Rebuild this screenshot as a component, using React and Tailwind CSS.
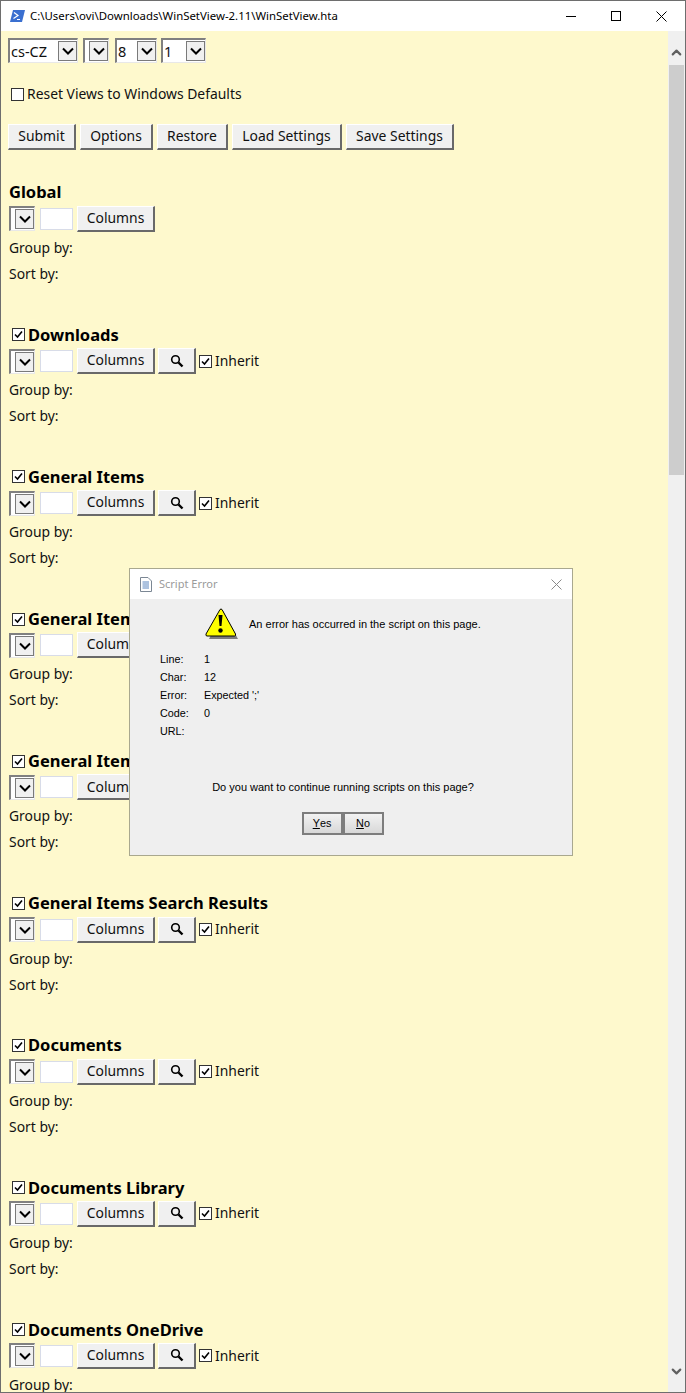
import { ChevronDown, ChevronUp } from "lucide-react";

const FONT = "font-['Noto_Sans','Open_Sans',sans-serif]";
const ARIAL = "font-['Liberation_Sans',Arial,sans-serif]";

const SECTIONS = [
  "Downloads",
  "General Items",
  "General Items",
  "General Items",
  "General Items Search Results",
  "Documents",
  "Documents Library",
  "Documents OneDrive",
];

function Arrow() {
  return (
    <span className="flex w-[19px] h-[20px] shrink-0 items-center justify-center bg-[#f0f0f0] border border-[#7a7a7a]">
      <svg width="12" height="8" viewBox="0 0 12 8">
        <path d="M1 1.5 L6 6.5 L11 1.5" fill="none" stroke="#000" strokeWidth="2" />
      </svg>
    </span>
  );
}

function Select({ value, width }) {
  return (
    <div
      className="flex h-[25px] items-center justify-between border-2 border-[#808080] border-r border-b border-r-[#e8e8e8] border-b-[#e8e8e8] bg-white"
      style={{ width }}
    >
      <span className="pl-[1px] text-[14.5px] leading-[21px]">{value}</span>
      <Arrow />
    </div>
  );
}

function Button({ children, width }) {
  return (
    <div
      className="flex h-[26px] items-center justify-center bg-[#f0f0f0] border border-white border-r-2 border-b-2 border-r-[#696969] border-b-[#696969]"
      style={{ width }}
    >
      {children}
    </div>
  );
}

function Check({ checked }) {
  return (
    <span className="flex w-[13px] h-[13px] shrink-0 items-center justify-center border border-[#333] bg-white">
      {checked && (
        <svg width="9" height="9" viewBox="0 0 9 9">
          <path d="M1 4.5 L3.5 7 L8 1.5" fill="none" stroke="#000" strokeWidth="1.6" />
        </svg>
      )}
    </span>
  );
}

function Section({ title, global }) {
  return (
    <div className={global ? "h-[143px]" : "h-[142.14px]"}>
      <div className="flex h-[22px] items-center gap-[3px] pl-[3px] text-[16.5px] font-bold leading-[22px] text-black">
        {!global && <Check checked />}
        <span className={global ? "-ml-[3px]" : ""}>{title}</span>
      </div>
      <div className={`flex h-[26px] items-center ${global ? "mt-[3px]" : "mt-[2.3px]"}`}>
        <Select value="" width={26} />
        <div className="ml-[5px] w-[33px] h-[22px] bg-white border border-[#d8dce8]" />
        <div className="ml-[4px]">
          <Button width={78}>Columns</Button>
        </div>
        {!global && (
          <>
            <div className="ml-[3px]">
              <Button width={38}>
                <svg width="14" height="14" viewBox="0 0 14 14">
                  <circle cx="5.5" cy="5.5" r="3.8" fill="none" stroke="#000" strokeWidth="1.6" />
                  <path d="M8.5 8.5 L12.5 12.5" stroke="#000" strokeWidth="2.4" />
                </svg>
              </Button>
            </div>
            <div className="ml-[3px]">
              <Check checked />
            </div>
            <span className="ml-[3px]">Inherit</span>
          </>
        )}
      </div>
      <div className="mt-[3px] h-[26px] leading-[26px]">Group by:</div>
      <div className="h-[26px] leading-[26px]">Sort by:</div>
    </div>
  );
}

function ScriptError() {
  return (
    <div className={`absolute left-[128px] top-[567px] w-[444px] h-[288px] border border-[#a9a88f] bg-[#efefef] text-[10.8px] text-black ${ARIAL}`}>
      <div className="flex h-[30px] items-center justify-between bg-white pl-[10px] pr-[10px]">
        <div className="flex items-center gap-[7px] text-[11px] text-[#9a9a9a]">
          <svg width="12" height="15" viewBox="0 0 12 15">
            <path d="M0.5 0.5 H8 L11.5 4 V14.5 H0.5 Z" fill="#fff" stroke="#7b8794" />
            <path d="M2.5 5 H9 M2.5 7 H9 M2.5 9 H9 M2.5 11 H9" stroke="#5a86c0" />
          </svg>
          <span className={FONT}>Script Error</span>
        </div>
        <svg width="11" height="11" viewBox="0 0 11 11">
          <path d="M0.5 0.5 L10.5 10.5 M10.5 0.5 L0.5 10.5" stroke="#8a8a8a" />
        </svg>
      </div>
      <div className="flex h-[42px] items-center pl-[75px] pt-[8px]">
        <svg width="34" height="33" viewBox="0 0 34 33">
          <path d="M18 3 L33 31 H4 Z" fill="#7d7d7d" />
          <path d="M15 1.500 Q16 0.500 17 1.500 L30.500 26 Q31 28 29.500 28 H2 Q0.500 28 1 26 Z" fill="#ffff00" stroke="#000" />
          <path d="M13.500 7 H17.500 L16.500 18 H14.500 Z" fill="#000" />
          <circle cx="15.500" cy="22.500" r="2.200" fill="#000" />
        </svg>
        <span className="ml-[10px] mt-[1px] text-[11px]">An error has occurred in the script on this page.</span>
      </div>
      <div className="mt-[9px] pl-[30px]">
        {[
          ["Line:", "1"],
          ["Char:", "12"],
          ["Error:", "Expected ';'"],
          ["Code:", "0"],
          ["URL:", ""],
        ].map(([label, value]) => (
          <div key={label} className="flex h-[18px] items-center">
            <span className="w-[44px]">{label}</span>
            <span>{value}</span>
          </div>
        ))}
      </div>
      <div className="mt-[39px] pr-[16px] text-center text-[11px]">Do you want to continue running scripts on this page?</div>
      <div className="mt-[16px] flex justify-center pr-[17px]">
        {["Y|es", "N|o"].map((t) => {
          const [a, b] = t.split("|");
          return (
            <div
              key={t}
              className="flex h-[23px] w-[41px] items-center justify-center border-2 border-[#7d7d7d] bg-gradient-to-b from-[#f2f2f2] to-[#d8d8d8]"
            >
              <span className="underline">{a}</span>
              {b}
            </div>
          );
        })}
      </div>
    </div>
  );
}

export default function App() {
  return (
    <div className={`relative w-[686px] h-[1393px] overflow-hidden border border-[#6e6e6e] bg-white text-[13.9px] text-[#111] ${FONT}`}>
      {/* TITLE BAR */}
      <div className="flex h-[30px] items-center bg-white">
        <svg className="ml-[9px]" width="15" height="12" viewBox="0 0 15 12">
          <path d="M3 0 H15 L12 12 H0 Z" fill="#3a6fd0" />
          <path d="M4 2.500 L8 5.500 L3.500 8.500 M7 9.500 H10" fill="none" stroke="#fff" strokeWidth="1.2" />
        </svg>
        <span className="ml-[5px] text-[11.4px] text-black">C:\Users\ovi\Downloads\WinSetView-2.11\WinSetView.hta</span>
        <div className="ml-auto flex items-center">
          <div className="w-[10px] h-[1px] bg-black mr-[35px]" />
          <div className="w-[10px] h-[10px] border border-black mr-[35px]" />
          <svg className="mr-[18px]" width="11" height="11" viewBox="0 0 11 11">
            <path d="M0.5 0.5 L10.5 10.5 M10.5 0.5 L0.5 10.5" stroke="#000" />
          </svg>
        </div>
      </div>

      <div className="flex h-[1361px]">
        {/* PAGE */}
        <div className="flex-1 overflow-hidden bg-[#fef9cd] pl-[7px]">
          <div className="mt-[7px] flex">
            <Select value="cs-CZ" width={70} />
            <div className="ml-[5px]">
              <Select value="" width={26} />
            </div>
            <div className="ml-[6px]">
              <Select value="8" width={42} />
            </div>
            <div className="ml-[4px]">
              <Select value="1" width={45} />
            </div>
          </div>
          <div className="mt-[20px] flex h-[22px] items-center gap-[3px] pl-[3px]">
            <Check />
            <span>Reset Views to Windows Defaults</span>
          </div>
          <div className="mt-[19px] flex gap-[4px]">
            <Button width={68}>Submit</Button>
            <Button width={73}>Options</Button>
            <Button width={71}>Restore</Button>
            <Button width={110}>Load Settings</Button>
            <Button width={108}>Save Settings</Button>
          </div>
          <div className="mt-[30.8px] pl-[1px]">
            <Section title="Global" global />
            {SECTIONS.map((title, i) => (
              <Section key={i} title={title} />
            ))}
          </div>
        </div>

        {/* SCROLLBAR */}
        <div className="flex w-[17px] flex-col items-center bg-[#f0f0f0]">
          <div className="flex h-[34px] items-center justify-center pt-[8px]">
            <ChevronUp size={15} strokeWidth={3.5} color="#606060" />
          </div>
          <div className="h-[410px] w-[15px] bg-[#cdcdcd]" />
          <div className="mt-auto flex h-[34px] items-center justify-center pb-[8px]">
            <ChevronDown size={15} strokeWidth={3.5} color="#606060" />
          </div>
        </div>
      </div>

      <ScriptError />
    </div>
  );
}
